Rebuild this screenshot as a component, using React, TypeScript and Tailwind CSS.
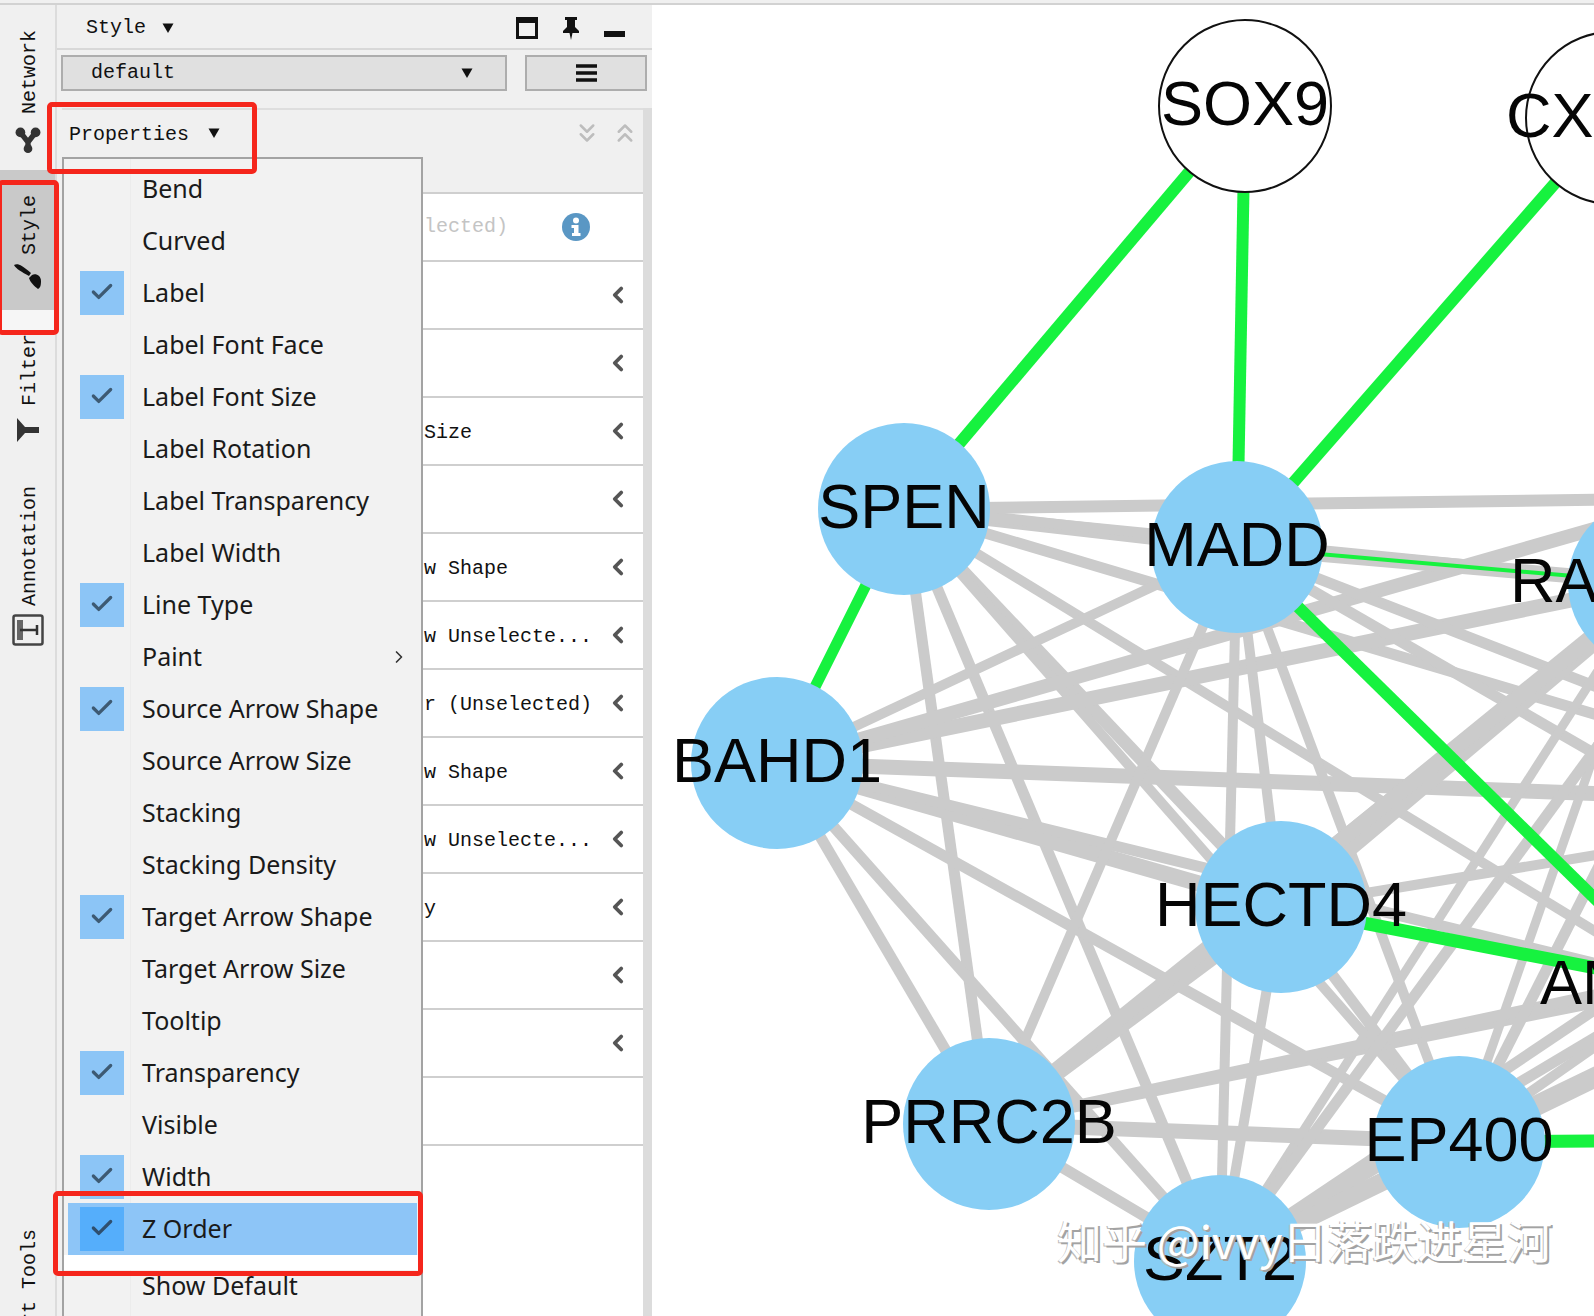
import React from 'react';
import { Check, ChevronLeft, ChevronRight, ChevronsDown, ChevronsUp } from 'lucide-react';

const MONO = "font-['Liberation_Mono',monospace]";

const menuItems = [
  { label: 'Bend' },
  { label: 'Curved' },
  { label: 'Label', checked: true },
  { label: 'Label Font Face' },
  { label: 'Label Font Size', checked: true },
  { label: 'Label Rotation' },
  { label: 'Label Transparency' },
  { label: 'Label Width' },
  { label: 'Line Type', checked: true },
  { label: 'Paint', submenu: true },
  { label: 'Source Arrow Shape', checked: true },
  { label: 'Source Arrow Size' },
  { label: 'Stacking' },
  { label: 'Stacking Density' },
  { label: 'Target Arrow Shape', checked: true },
  { label: 'Target Arrow Size' },
  { label: 'Tooltip' },
  { label: 'Transparency', checked: true },
  { label: 'Visible' },
  { label: 'Width', checked: true },
];

// what sticks out from behind the open menu
const rows = ['', '', 'Size', '', 'w Shape', 'w Unselecte...', 'r (Unselected)', 'w Shape', 'w Unselecte...', 'y', '', ''];

const pos: Record<string, [number, number]> = {
  s: [904, 509],
  m: [1237, 547],
  r: [1654, 583],
  b: [777, 763],
  h: [1281, 907],
  a: [1683, 985],
  p: [989, 1124],
  e: [1459, 1142],
  z: [1220, 1261],
  sox: [1245, 106],
  cx: [1612, 118],
  // nodes past the right edge of the window
  X: [1950, 495],
  Y: [1900, 805],
  U: [1800, 470],
  V: [1900, 930],
  G: [1750, 1140],
};

const grey: [string, string, number][] = [
  ['s', 'm', 15], ['s', 'r', 10], ['s', 'X', 12], ['s', 'h', 13], ['s', 'e', 10], ['s', 'p', 11], ['s', 'z', 11], ['s', 'a', 10], ['s', 'Y', 11],
  ['b', 'm', 10], ['b', 'r', 15], ['b', 'h', 16], ['b', 'e', 11], ['b', 'z', 11], ['b', 'p', 11], ['b', 'Y', 15], ['b', 'U', 14], ['b', 'a', 11],
  ['m', 'r', 15], ['m', 'h', 10], ['m', 'p', 10], ['m', 'z', 10], ['m', 'e', 10], ['m', 'Y', 11], ['m', 'V', 11],
  ['r', 'h', 11], ['r', 'p', 11], ['r', 'z', 9], ['r', 'e', 9],
  ['h', 'p', 15], ['h', 'z', 10], ['h', 'e', 11], ['h', 'Y', 10], ['h', 'U', 15], ['h', 'a', 10],
  ['a', 'p', 11], ['a', 'z', 11], ['a', 'e', 10],
  ['p', 'e', 15], ['p', 'z', 11], ['p', 'U', 15], ['p', 'V', 11],
  ['e', 'z', 15], ['e', 'U', 11], ['e', 'V', 19],
  ['z', 'U', 11], ['z', 'Y', 11], ['z', 'V', 18],
];

const green: [string, string, number][] = [
  ['sox', 's', 12], ['sox', 'm', 12], ['cx', 'm', 12], ['s', 'b', 11], ['m', 'a', 12], ['m', 'r', 4], ['h', 'a', 13], ['e', 'G', 13],
];

const nodes: { id: string; label: string; x?: number; white?: boolean }[] = [
  { id: 'sox', label: 'SOX9', white: true },
  { id: 'cx', label: 'CX', x: 1506, white: true },
  { id: 's', label: 'SPEN' },
  { id: 'm', label: 'MADD' },
  { id: 'r', label: 'RA', x: 1510 },
  { id: 'b', label: 'BAHD1' },
  { id: 'h', label: 'HECTD4' },
  { id: 'a', label: 'AN', x: 1540 },
  { id: 'p', label: 'PRRC2B' },
  { id: 'e', label: 'EP400' },
  { id: 'z', label: 'SZT2' },
];

function Caret({ className }: { className: string }) {
  return (
    <svg viewBox="0 0 12 12" className={className}>
      <path d="M0.5 1.5H11.5L6 11Z" fill="#111" />
    </svg>
  );
}

function NetworkGraph() {
  return (
    <svg viewBox="652 5 942 1311" className="w-full h-full block">
      {grey.map(([a, b, w], i) => (
        <line key={i} x1={pos[a][0]} y1={pos[a][1]} x2={pos[b][0]} y2={pos[b][1]} stroke="#cbcbcb" strokeWidth={w} />
      ))}
      {green.map(([a, b, w], i) => (
        <line key={i} x1={pos[a][0]} y1={pos[a][1]} x2={pos[b][0]} y2={pos[b][1]} stroke="#16f23f" strokeWidth={w} />
      ))}
      {nodes.map((n) => (
        <circle
          key={n.id}
          cx={pos[n.id][0]}
          cy={pos[n.id][1]}
          r={86}
          fill={n.white ? '#fff' : '#87cef5'}
          stroke={n.white ? '#111' : 'none'}
          strokeWidth={2}
        />
      ))}
      {nodes.map((n) => (
        <text
          key={n.id}
          x={n.x ?? pos[n.id][0]}
          y={pos[n.id][1] + 19}
          textAnchor={n.x ? 'start' : 'middle'}
          fontFamily="'Liberation Sans', Arial, sans-serif"
          fontSize={63}
          fill="#050505"
        >
          {n.label}
        </text>
      ))}
    </svg>
  );
}

function SideRail() {
  const vertical = `${MONO} text-[20px] leading-[24px] text-[#111] pr-[4px] [writing-mode:vertical-rl] rotate-180`;
  return (
    <div className="w-[57px] shrink-0 bg-[#f0f0f0] border-r-2 border-[#dcdcdc] flex flex-col items-center overflow-hidden">
      <div className="h-[165px] shrink-0 flex flex-col items-center pt-[25px]">
        <span className={vertical}>Network</span>
        <svg viewBox="0 0 24 24" className="w-[26px] h-[26px] mt-[13px]">
          <path d="M5 5L12 14L19 5M12 14V20" stroke="#333" strokeWidth="5" fill="none" />
          <circle cx="5" cy="5" r="4.5" fill="#333" />
          <circle cx="19" cy="5" r="4.5" fill="#333" />
          <circle cx="12" cy="20" r="4" fill="#333" />
        </svg>
      </div>
      <div className="h-[140px] w-full shrink-0 bg-[#c9c9c9] flex flex-col items-center pt-[25px]">
        <span className={vertical}>Style</span>
        <svg viewBox="0 0 30 30" className="w-[30px] h-[30px] mt-[8px]">
          <path d="M1 2C4 0 8 1 18 10L16 13C9 9 3 6 1 2Z" fill="#111" />
          <path d="M19 12C23 10 28 13 28 18C28 23 27 25 25 26C22 24 17 19 16 15Z" fill="#111" />
        </svg>
      </div>
      <div className="h-[24px] w-full shrink-0 bg-[#f6f6f6]" />
      <span className={vertical}>Filter</span>
      <svg viewBox="0 0 22 24" className="w-[22px] h-[24px] mt-[12px] shrink-0">
        <path d="M0 0L8 9H22V15H8L0 24Z" fill="#333" />
      </svg>
      <span className={`${vertical} mt-[44px]`}>Annotation</span>
      <svg viewBox="0 0 32 32" className="w-[32px] h-[32px] mt-[8px] shrink-0">
        <rect x="1.5" y="1.5" width="29" height="29" rx="2" fill="#f0f0f0" stroke="#444" strokeWidth="2.5" />
        <rect x="5" y="6" width="6" height="20" fill="#666" />
        <path d="M8 16H25M25 11V21" stroke="#333" strokeWidth="2.5" fill="none" />
      </svg>
      <span className={`${vertical} mt-[583px] shrink-0`}>Import Tools</span>
    </div>
  );
}

function PropertiesMenu() {
  return (
    <div className="absolute left-[5px] top-[152px] w-[361px] h-[1200px] bg-[#f2f2f2] border-2 border-[#a3a3a3] pt-[4px] font-['Noto_Sans',sans-serif] text-[25px] text-[#1a1a1a]">
      <div className="absolute left-[66px] top-0 bottom-0 w-px bg-[#ececec]" />
      {menuItems.map((item) => (
        <div key={item.label} className="relative mx-[4px] h-[52px] flex items-center">
          <div className={`ml-[12px] w-[44px] h-[44px] flex items-center justify-center ${item.checked ? 'bg-[#8cc5f6]' : ''}`}>
            {item.checked && <Check size={26} strokeWidth={3} className="text-[#3d5a73] mb-[3px]" />}
          </div>
          <span className="ml-[18px]">{item.label}</span>
          {item.submenu && <ChevronRight size={20} strokeWidth={2} className="ml-auto mr-[8px] text-[#333]" />}
        </div>
      ))}
      <div className="relative mx-[4px] h-[52px] bg-[#8dc5f7] flex items-center">
        <div className="ml-[12px] w-[44px] h-[44px] bg-[#55aefb] flex items-center justify-center">
          <Check size={26} strokeWidth={3} className="text-[#2f4f6e] mb-[3px]" />
        </div>
        <span className="ml-[18px]">Z Order</span>
      </div>
      <div className="relative h-[15px] bg-white" />
      <div className="relative h-[32px] flex items-center pl-[78px]">Show Default</div>
    </div>
  );
}

function StylePanel() {
  return (
    <div className={`relative w-[595px] shrink-0 bg-[#f0f0f0] flex flex-col overflow-hidden ${MONO} text-[20px] text-[#111]`}>
      <div className="h-[45px] shrink-0 border-b-2 border-[#d8d8d8] flex items-center pl-[29px] pt-[3px]">
        <span>Style</span>
        <Caret className="w-[12px] h-[12px] ml-[16px]" />
        <svg viewBox="0 0 22 22" className="w-[22px] h-[22px] ml-[342px]">
          <rect x="1.5" y="1.5" width="19" height="19" fill="none" stroke="#111" strokeWidth="3" />
          <rect x="1" y="1" width="20" height="5" fill="#111" />
        </svg>
        <svg viewBox="0 0 22 24" className="w-[22px] h-[24px] ml-[22px]">
          <path d="M5 1H17V4H15V11L19 15V17H12.5L11 24L9.5 17H3V15L7 11V4H5Z" fill="#111" />
        </svg>
        <div className="w-[21px] h-[6px] bg-[#111] ml-[22px] mt-[12px]" />
      </div>
      <div className="flex pt-[5px] pl-[4px] shrink-0">
        <div className="w-[446px] h-[36px] bg-[#e0e0e0] border-2 border-[#adadad] flex items-center pl-[28px]">
          <span>default</span>
          <Caret className="w-[12px] h-[12px] ml-[286px]" />
        </div>
        <div className="w-[122px] h-[36px] ml-[18px] bg-[#e0e0e0] border-2 border-[#adadad] flex items-center justify-center">
          <svg viewBox="0 0 21 18" className="w-[21px] h-[18px]">
            <path d="M0 2H21M0 9H21M0 16H21" stroke="#111" strokeWidth="3.5" />
          </svg>
        </div>
      </div>
      <div className="ml-[5px] mr-[9px] mt-[17px] flex-1 flex flex-col border-t-2 border-[#dedede] min-h-0">
        <div className="h-[82px] shrink-0 flex items-start pl-[7px] pt-[10px]">
          <span>Properties</span>
          <Caret className="w-[12px] h-[12px] ml-[19px] mt-[7px]" />
          <ChevronsDown size={30} strokeWidth={2} className="text-[#bdbdbd] ml-[352px] -mt-[2px]" />
          <ChevronsUp size={30} strokeWidth={2} className="text-[#bdbdbd] ml-[8px] -mt-[2px]" />
        </div>
        <div className="flex-1 bg-white border-t-2 border-[#cfcfcf]">
          <div className="h-[68px] border-b-2 border-[#cfcfcf] flex items-center pl-[362px]">
            <span className="text-[#c4c4c4]">lected)</span>
            <svg viewBox="0 0 28 28" className="w-[28px] h-[28px] ml-[54px]">
              <circle cx="14" cy="14" r="14" fill="#5a97c4" />
              <circle cx="14" cy="7.5" r="3" fill="#fff" />
              <path d="M9.5 12H16.5V20H18.5V23H10V20H12V15H9.5Z" fill="#fff" />
            </svg>
          </div>
          {rows.map((text, i) => (
            <div key={i} className="h-[68px] border-b-2 border-[#cfcfcf] flex items-center pl-[362px] pr-[12px]">
              <span className="whitespace-pre pt-[3px]">{text}</span>
              <ChevronLeft size={26} strokeWidth={3.5} className="ml-auto text-[#555]" />
            </div>
          ))}
          <div className="h-[68px] border-b-2 border-[#cfcfcf]" />
        </div>
      </div>
      <div className="absolute right-0 top-[103px] bottom-0 w-[9px] bg-[#dcdcdc]" />
      <PropertiesMenu />
    </div>
  );
}

export default function App() {
  return (
    <div className="relative w-[1594px] h-[1316px] overflow-hidden bg-white flex flex-col">
      <div className="h-[5px] shrink-0 bg-[#f0f0f0] border-b-2 border-[#d2d2d2]" />
      <div className="flex-1 flex min-h-0">
        <SideRail />
        <StylePanel />
        <div className="relative flex-1 min-w-0 overflow-hidden">
          <NetworkGraph />
          <div className="absolute left-[405px] top-[1207px] font-['Noto_Sans_CJK_SC',sans-serif] text-[45px] leading-[56px] whitespace-nowrap text-white [text-shadow:2px_2px_0_#a3a3a3,-1px_1px_0_#bbbbbb]">
            知乎 @ivvy日落跌进星河
          </div>
        </div>
      </div>
      {/* red annotation boxes drawn on the screenshot */}
      <div className="absolute left-[47px] top-[102px] w-[210px] h-[72px] border-[5px] border-[#f5261c] rounded-[5px]" />
      <div className="absolute -left-[3px] top-[180px] w-[62px] h-[155px] border-[5px] border-[#f5261c] rounded-[5px]" />
      <div className="absolute left-[53px] top-[1191px] w-[370px] h-[85px] border-[5px] border-[#f5261c] rounded-[5px]" />
    </div>
  );
}
